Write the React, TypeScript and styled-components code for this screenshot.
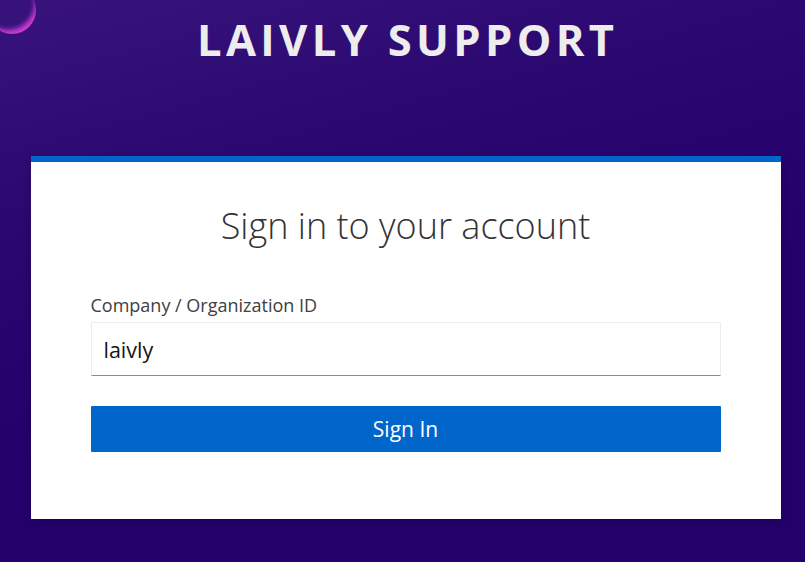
import React, { useState } from 'react'
import styled, { createGlobalStyle } from 'styled-components'

const GlobalStyle = createGlobalStyle`
  html, body {
    margin: 0;
    padding: 0;
  }
  body {
    font-family: 'Open Sans', 'Noto Sans', sans-serif;
    background: #24006a;
  }
`

const Page = styled.div`
  position: relative;
  min-height: 562px;
  overflow: hidden;
  padding-left: 6px;
  background: linear-gradient(165deg, #38137c 0%, #2a0870 30%, #24006a 60%, #24016a 100%);
  display: flex;
  flex-direction: column;
  align-items: center;
`

const Moon = styled.div`
  position: absolute;
  left: -12px;
  top: -14px;
  width: 48px;
  height: 48px;
  border-radius: 50%;
  box-shadow: inset -4px -7px 5px -3px rgba(214, 64, 220, 0.95);
`

const Header = styled.h1`
  margin: 12px 0 0;
  color: #ededed;
  font-size: 43.5px;
  font-weight: 700;
  letter-spacing: 0.1em;
  line-height: 56px;
  text-transform: uppercase;
  padding-left: 0.1em;
`

const Card = styled.div`
  margin-top: 88px;
  width: 750px;
  box-sizing: border-box;
  background: #fff;
  border-top: 6px solid #0066cc;
  padding: 38px 60px 67px;
  box-shadow: 0 2px 8px rgba(0, 0, 0, 0.2);
`

const Title = styled.h2`
  margin: 0 0 40px;
  text-align: center;
  font-size: 36px;
  font-weight: 300;
  color: #333;
  line-height: 52px;
`

const Form = styled.form`
  display: flex;
  flex-direction: column;
`

const Label = styled.label`
  font-size: 18px;
  color: #404040;
  line-height: 26px;
  margin-bottom: 4px;
`

const Input = styled.input`
  height: 54px;
  box-sizing: border-box;
  border: 1px solid #ededed;
  border-bottom: 1px solid #8a8d90;
  padding: 0 12px;
  font-family: inherit;
  font-size: 21.5px;
  color: #151515;
  outline: none;
`

const SubmitButton = styled.button`
  margin-top: 30px;
  height: 46px;
  border: none;
  border-radius: 1px;
  background: #0066cc;
  color: #fff;
  font-family: inherit;
  font-size: 21px;
  cursor: pointer;
`

export default function App() {
  const [orgId, setOrgId] = useState('laivly')

  return (
    <Page>
      <GlobalStyle />
      <Moon />
      <Header>Laivly Support</Header>
      <Card>
        <Title>Sign in to your account</Title>
        <Form onSubmit={(e) => e.preventDefault()}>
          <Label htmlFor="org">Company / Organization ID</Label>
          <Input id="org" value={orgId} onChange={(e) => setOrgId(e.target.value)} />
          <SubmitButton type="submit">Sign In</SubmitButton>
        </Form>
      </Card>
    </Page>
  )
}
